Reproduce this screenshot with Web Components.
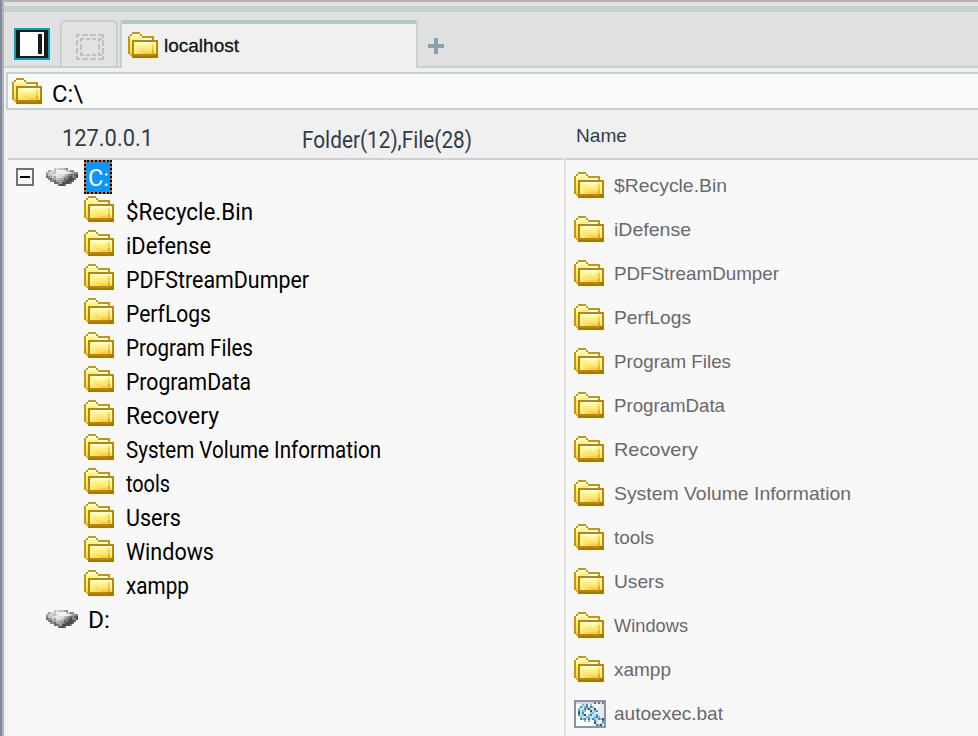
<!DOCTYPE html>
<html lang="en">
<head>
<meta charset="utf-8">
<title>localhost</title>
<style>
  html, body { margin: 0; height: 100%; overflow: hidden; background: #f8f8f8; }
  body { font-family: Roboto, "Liberation Sans", sans-serif; color: #000; }
</style>
</head>
<body>
<fm-window></fm-window>

<script>
// Icons are small bitmaps: one character per cell, each cell is 2px
const ICONS = {
  folder: {
    palette: {
      o: "#c49a00", d: "#b8860a", b: "#a87800", w: "#fffef0", y: "#fffb9c",
      l: "#fff27a", m: "#ffe873", g: "#ffdc66", a: "#fbc850", h: "#e8b020",
    },
    rows: [
      "..oooo.........",
      ".owwwwo........",
      "owyyyywoooooo..",
      "oylllllwwwwwo..",
      "oldddddddddddddd".slice(0, 15),
      "oldywwwwwwwwywd",
      "omdyyyyyyyylgyd",
      "omdyllllllllayd",
      "ogdylmmmmmmmayd",
      "ogdlmmgggggghld",
      "oadlmgggaaaahgd",
      ".hdddddddddddbb",
      "..bbbbbbbbbbbbb",
    ],
  },
  drive: {
    palette: {
      a: "#f0f0f0", b: "#dedede", c: "#c2c2c2", d: "#a6a6a6",
      e: "#878787", f: "#69696e", g: "#4b4b50", v: "#807ea4",
    },
    rows: [
      "....cbcccde.....",
      ".dcbcaaaaaccee..",
      "dcbccbaaaaabcdee",
      "eccbbabbbcdefvfg",
      "fedcdbbbcdefgvvg",
      ".efddccddfegggf.",
      "..eefdddefgggf..",
      "....ffedgggge...",
      "......fggf......",
    ],
  },
  batch: {
    palette: {
      o: "#8e949f", w: "#ffffff", t: "#d4dae6", p: "#e7eaf0", x: "#68758f",
      l: "#c1e2f1", m: "#82bad5", b: "#4788ae", d: "#24587f", g: "#adb9c5",
    },
    rows: [
      "oooooooooooooooo",
      "otttttttttxtxtxo",
      "owwwmlbwmwwwwppo",
      "owwblmblbmwwpppo",
      "owmllbgdlldwpppo",
      "owblmgwwdlmbpppo",
      "owdlbwwwgmlwpppo",
      "owblmdwgbllbpppo",
      "owwmllmmllmbmppo",
      "owwbmblblbmlbmdo",
      "owwwwmwmwwblwwbo",
      "owwwwwwwwwdlwlmo",
      "owwwwwwwwwwbmdpo",
      "oooooooooooooooo",
    ],
  },
  panel: {
    palette: { c: "#0c9dbb", k: "#17191b", w: "#ffffff" },
    rows: [
      "cccccccccccccccccc",
      "ckkkkkkkkkkkkkkkkc",
      "ckkwwwwwwwwwwwwkkc",
      "ckkwwwwwwwwwkkwkkc",
      "ckkwwwwwwwwwkkwkkc",
      "ckkwwwwwwwwwkkwkkc",
      "ckkwwwwwwwwwkkwkkc",
      "ckkwwwwwwwwwkkwkkc",
      "ckkwwwwwwwwwkkwkkc",
      "ckkwwwwwwwwwkkwkkc",
      "ckkwwwwwwwwwkkwkkc",
      "ckkwwwwwwwwwkkwkkc",
      "ckkwwwwwwwwwkkwkkc",
      "ckkwwwwwwwwwwwwkkc",
      "ckkkkkkkkkkkkkkkkc",
      "cccccccccccccccccc",
    ],
  },
  empty: {
    palette: { g: "#c0c0c0" },
    rows: [
      "gg.ggg.ggg.ggg",
      "g............g",
      "..gg.gg.gg.gg.",
      "g.g........g.g",
      "g............g",
      "g.g........g.g",
      "..g........g..",
      "g.g........g.g",
      "g............g",
      "g.g........g.g",
      "..gg.gg.gg.gg.",
      "g............g",
      "gg.ggg.ggg.ggg",
    ],
  },
  plus: {
    palette: { p: "#87a1ac" },
    rows: ["...pp...", "...pp...", "...pp...", "pppppppp", "pppppppp", "...pp...", "...pp...", "...pp..."],
  },
  minus: {
    palette: { o: "#727272", k: "#000000", w: "#fafafa" },
    rows: ["ooooooooo", "owwwwwwwo", "owwwwwwwo", "owwwwwwwo", "owkkkkkwo", "owwwwwwwo", "owwwwwwwo", "owwwwwwwo", "ooooooooo"],
  },
};

class FmIcon extends HTMLElement {
  constructor() {
    super();
    this.attachShadow({ mode: "open" });
  }

  connectedCallback() {
    const { palette, rows } = ICONS[this.getAttribute("name")];
    const w = rows[0].length;
    const h = rows.length;
    let cells = "";
    rows.forEach((row, y) => {
      for (let x = 0; x < row.length; ) {
        let n = 1;
        while (row[x + n] === row[x]) n++;
        if (row[x] !== ".") {
          cells += `<rect x="${x}" y="${y}" width="${n}" height="1" fill="${palette[row[x]]}"/>`;
        }
        x += n;
      }
    });
    this.shadowRoot.innerHTML = `
      <style>
        :host{display:block;flex:none;width:${w * 2}px;height:${h * 2}px}
        svg{display:block}
      </style>
      <svg width="${w * 2}" height="${h * 2}" viewBox="0 0 ${w} ${h}" shape-rendering="crispEdges">${cells}</svg>
    `;
  }
}
customElements.define("fm-icon", FmIcon);

// One line of text, stretched or condensed to the given width
class FmLabel extends HTMLElement {
  constructor() {
    super();
    this.attachShadow({ mode: "open" });
    this.shadowRoot.innerHTML = `
      <style>
        :host{display:block;flex:none}
        span{display:inline-block;white-space:nowrap;transform-origin:0 50%}
      </style>
      <span><slot></slot></span>
    `;
  }

  connectedCallback() {
    const width = Number(this.getAttribute("width"));
    if (!width) return;
    const span = this.shadowRoot.querySelector("span");
    const natural = span.getBoundingClientRect().width;
    span.style.transform = `scaleX(${width / natural})`;
    this.style.width = `${width}px`;
  }
}
customElements.define("fm-label", FmLabel);

class FmTabs extends HTMLElement {
  constructor() {
    super();
    this.attachShadow({ mode: "open" });
    this.shadowRoot.innerHTML = `
      <style>
        :host{display:flex;height:56px;background:#e0e0e0;--line:#c5d1d0}
        div{box-sizing:border-box;border-bottom:2px solid var(--line)}
        .panel{width:56px;padding:16px 0 0 10px}
        .empty{width:60px;display:flex}
        .empty i{box-sizing:border-box;width:58px;border:2px solid var(--line);border-bottom:0;
          margin-top:8px;border-radius:5px 5px 0 0;padding:12px 0 0 14px;background:#e2e2e2}
        .active{width:298px;margin-top:8px;display:flex;background:#f0f0f0;
          border:2px solid var(--line);border-top:4px solid #adc8c6;border-bottom:0;
          border-radius:4px 4px 0 0;padding:8px 0 0 6px}
        .active fm-label{font:19px/26px "Liberation Sans",sans-serif;margin:1px 0 0 6px;color:#101418;
          -webkit-text-stroke:.3px #101418}
        .rest{flex:1;padding:26px 0 0 10px}
      </style>
      <div class="panel"><fm-icon name="panel"></fm-icon></div>
      <div class="empty"><i><fm-icon name="empty"></fm-icon></i></div>
      <div class="active"><fm-icon name="folder"></fm-icon><fm-label width="75"></fm-label></div>
      <div class="rest"><fm-icon name="plus"></fm-icon></div>
    `;
    this.shadowRoot.querySelector("fm-label").textContent = this.getAttribute("active");
  }
}
customElements.define("fm-tabs", FmTabs);

class FmAddress extends HTMLElement {
  constructor() {
    super();
    this.attachShadow({ mode: "open" });
    this.shadowRoot.innerHTML = `
      <style>
        :host{box-sizing:border-box;display:flex;height:38px;margin:4px 0 0 2px;background:#fafafa;
          border:2px solid #c5d1d0;border-right:0;padding:4px 0 0 4px;font-size:24px;line-height:26px}
        ::slotted(fm-label){margin:3px 0 0 10px}
      </style>
      <fm-icon name="folder"></fm-icon><slot></slot>
    `;
  }
}
customElements.define("fm-address", FmAddress);

class FmTreeRow extends HTMLElement {
  constructor() {
    super();
    this.attachShadow({ mode: "open" });
  }

  connectedCallback() {
    const root = this.getAttribute("icon") === "drive";
    this.shadowRoot.innerHTML = `
      <style>
        :host{display:flex;height:34px;align-items:center;font-size:24.5px;line-height:34px;
          padding-left:${root ? 8 : 76}px}
        .toggle{width:18px;margin-right:12px}
        .name{margin-left:${root ? 6 : 12}px;padding-top:${root ? 0 : 2}px}
        .root{box-sizing:border-box;height:34px;width:28px;padding:1px 0 0 4px}
        :host([selected]) .root{background:#0a95ff;color:#fff;outline:2px dotted #000;outline-offset:-2px;
          box-shadow:inset 0 0 0 2px #d96a1c}
        fm-icon[name=folder]{margin-top:-4px}
      </style>
      ${root ? `<div class="toggle">${this.hasAttribute("selected") ? '<fm-icon name="minus"></fm-icon>' : ""}</div>` : ""}
      <fm-icon name="${this.getAttribute("icon")}"></fm-icon>
      <div class="name ${root ? "root" : ""}"><slot></slot></div>
    `;
  }
}
customElements.define("fm-tree-row", FmTreeRow);

class FmFileRow extends HTMLElement {
  constructor() {
    super();
    this.attachShadow({ mode: "open" });
  }

  connectedCallback() {
    this.shadowRoot.innerHTML = `
      <style>
        :host{display:flex;height:44px;align-items:center;color:#68686d;
          font:19px/44px "Liberation Sans",sans-serif}
        div{width:40px;height:26px}
        ::slotted(fm-label){padding-top:2px}
      </style>
      <div><fm-icon name="${this.getAttribute("icon")}"></fm-icon></div><slot></slot>
    `;
  }
}
customElements.define("fm-file-row", FmFileRow);

// name, width in the tree, width in the list
const FOLDERS = [
  ["$Recycle.Bin", 127, 113],
  ["iDefense", 85, 77],
  ["PDFStreamDumper", 183, 165],
  ["PerfLogs", 85, 77],
  ["Program Files", 127, 117],
  ["ProgramData", 125, 111],
  ["Recovery", 93, 84],
  ["System Volume Information", 255, 237],
  ["tools", 44, 40],
  ["Users", 55, 50],
  ["Windows", 88, 74],
  ["xampp", 63, 57],
];

class FmWindow extends HTMLElement {
  constructor() {
    super();
    this.attachShadow({ mode: "open" });
  }

  connectedCallback() {
    const tree = FOLDERS.map(
      ([name, w]) => `<fm-tree-row icon="folder"><fm-label width="${w}">${name}</fm-label></fm-tree-row>`
    ).join("");
    const list = FOLDERS.map(
      ([name, , w]) => `<fm-file-row icon="folder"><fm-label width="${w}">${name}</fm-label></fm-file-row>`
    ).join("");
    this.shadowRoot.innerHTML = `
      <style>
        :host{box-sizing:border-box;display:flex;flex-direction:column;height:100vh;
          border-left:2px solid #7f8b9d;background:#f0f0f0}
        .frame{flex:1;min-height:0;display:flex;flex-direction:column;
          border-left:2px solid #b5b2b2;border-top:2px solid #b4b4b4}
        .strip{height:6px;border-top:4px solid #e0e0e0;background:#c5d1d0}
        .panes{flex:1;min-height:0;display:flex;margin-left:4px}
        section{display:flex;flex-direction:column}
        .left{width:556px}
        .right{flex:1}
        .head{box-sizing:border-box;height:50px;flex:none;border-bottom:2px solid #d1d1d1;display:flex;
          font-size:24.5px;line-height:30px;color:#303c48}
        .body{flex:1;min-height:0;background:#f8f8f8}
        .split{width:2px;margin-top:48px;background:#e3e3e3}
        .host{width:186px;padding:13px 0 0 54px}
        .count{padding:15px 0 0 54px}
        .right .head{padding:11px 0 0 10px;font:19px/30px "Liberation Sans",sans-serif}
        .right .body{padding:3px 0 0 8px}
      </style>
      <div class="frame">
        <div class="strip"></div>
        <fm-tabs active="localhost"></fm-tabs>
        <fm-address><fm-label width="31">C:\\</fm-label></fm-address>
        <div class="panes">
          <section class="left">
            <div class="head">
              <div class="host"><fm-label width="91">127.0.0.1</fm-label></div>
              <div class="count"><fm-label width="170">Folder(12),File(28)</fm-label></div>
            </div>
            <div class="body">
              <fm-tree-row icon="drive" selected><fm-label width="21">C:</fm-label></fm-tree-row>
              ${tree}
              <fm-tree-row icon="drive"><fm-label width="22">D:</fm-label></fm-tree-row>
            </div>
          </section>
          <div class="split"></div>
          <section class="right">
            <div class="head"><fm-label width="51">Name</fm-label></div>
            <div class="body">
              ${list}
              <fm-file-row icon="batch"><fm-label width="109">autoexec.bat</fm-label></fm-file-row>
            </div>
          </section>
        </div>
      </div>
    `;
  }
}
customElements.define("fm-window", FmWindow);
</script>
</body>
</html>
